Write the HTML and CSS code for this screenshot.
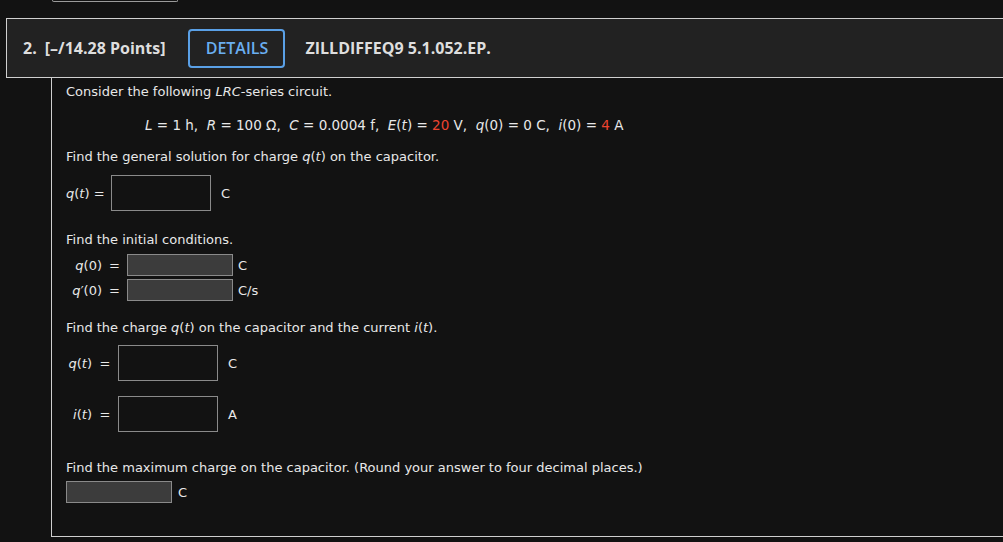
FILE: index.html
```html
<!DOCTYPE html>
<html>
<head>
<meta charset="utf-8">
<link rel="stylesheet" href="styles.css">
</head>
<body>
<div class="prev"></div>
<div class="qhead">
  <span class="num">2.</span>
  <span class="pts">[–/14.28 Points]</span>
  <span class="details">DETAILS</span>
  <span class="code">ZILLDIFFEQ9 5.1.052.EP.</span>
</div>
<div class="qbody">
  <p class="t p1">Consider the following <i>LRC</i>-series circuit.</p>
  <p class="m mline"><i>L</i> = 1 h,&nbsp; <i>R</i> = 100 Ω,&nbsp; <i>C</i> = 0.0004 f,&nbsp; <i>E</i>(<i>t</i>) = <span class="red">20</span> V,&nbsp; <i>q</i>(0) = 0 C,&nbsp; <i>i</i>(0) = <span class="red">4</span> A</p>
  <p class="t p2">Find the general solution for charge <span class="m"><i>q</i>(<i>t</i>)</span> on the capacitor.</p>
  <div class="row r1">
    <span class="m lbl1"><i>q</i>(<i>t</i>) =</span>
    <span class="box big"></span>
    <span class="unit u1">C</span>
  </div>
  <p class="t p3">Find the initial conditions.</p>
  <div class="grid g1">
    <span class="m lbl"><i>q</i>(0)</span><span class="m eq">=</span><span class="box small"></span><span class="unit">C</span>
    <span class="m lbl"><i>q</i>′(0)</span><span class="m eq">=</span><span class="box small"></span><span class="unit">C/s</span>
  </div>
  <p class="t p4">Find the charge <span class="m"><i>q</i>(<i>t</i>)</span> on the capacitor and the current <span class="m"><i>i</i>(<i>t</i>)</span>.</p>
  <div class="grid g2">
    <span class="m lbl"><i>q</i>(<i>t</i>)</span><span class="m eq">=</span><span class="box big"></span><span class="unit">C</span>
    <span class="m lbl"><i>i</i>(<i>t</i>)</span><span class="m eq">=</span><span class="box big"></span><span class="unit">A</span>
  </div>
  <p class="t p5">Find the maximum charge on the capacitor. (Round your answer to four decimal places.)</p>
  <div class="row r5">
    <span class="box small"></span>
    <span class="unit u5">C</span>
  </div>
</div>
</body>
</html>
```
FILE: styles.css
```css
html, body {
  margin: 0;
  padding: 0;
  background: #121212;
  color: #e8e8e8;
  overflow: hidden;
}
body {
  width: 1003px;
  height: 542px;
}
.prev {
  margin-left: 52px;
  width: 124px;
  height: 1px;
  border: 1px solid #9a9a9a;
  border-top: none;
  border-radius: 0 0 3px 3px;
}
.qhead {
  margin-top: 16px;
  margin-left: 6px;
  height: 58px;
  border: 1px solid #d0d0d0;
  border-right: none;
  background: #222222;
  display: flex;
  align-items: center;
  padding-left: 16px;
  font-family: "Open Sans", "Noto Sans", sans-serif;
  font-weight: 700;
  font-size: 16px;
  color: #dedede;
}
.num { margin-right: 8px; }
.pts { margin-right: 23px; }
.details {
  display: flex;
  align-items: center;
  justify-content: center;
  box-sizing: border-box;
  width: 97px;
  height: 39px;
  border: 2px solid #5aa0e6;
  border-radius: 4px;
  color: #6aaef0;
  font-weight: 600;
  margin-right: 20px;
}
.qbody {
  margin-left: 51px;
  height: 452px;
  border-left: 1px solid #cfcfcf;
  border-bottom: 1px solid #cfcfcf;
  padding-left: 14px;
  padding-top: 6px;
  font-family: "DejaVu Sans", sans-serif;
  font-size: 13px;
}
p { margin: 0; line-height: 16px; }
.t { font-family: "DejaVu Sans", sans-serif; font-size: 13px; }
.m { font-family: "DejaVu Sans", sans-serif; }
.m i { font-style: oblique; }
.t .m { font-size: 13px; }
.red { color: #ee4430; }
.mline { margin-top: 17px; margin-left: 79px; font-size: 13.5px; }
.p2 { margin-top: 16px; }
.row { display: flex; align-items: center; }
.r1 { margin-top: 10px; }
.lbl1 { width: 45px; font-size: 13px; }
.box {
  display: block;
  box-sizing: border-box;
  border: 1px solid #8a8a8a;
}
.big { width: 100px; height: 36px; background: #121212; }
.small { width: 106px; height: 22px; background: #3c3c3c; }
.unit { font-family: "DejaVu Sans", sans-serif; font-size: 13px; }
.u1 { margin-left: 10px; }
.p3 { margin-top: 21px; }
.grid {
  display: grid;
  align-items: center;
}
.grid .m { font-size: 13px; }
.g1 {
  margin-top: 6px;
  grid-template-columns: 36px 25px 106px auto;
  row-gap: 3px;
}
.g1 .lbl { text-align: right; }
.g1 .eq { text-align: center; }
.g1 .unit { margin-left: 5px; }
.p4 { margin-top: 19px; }
.g2 {
  margin-top: 9px;
  grid-template-columns: 26px 26px 100px auto;
  row-gap: 15px;
}
.g2 .lbl { text-align: right; }
.g2 .eq { text-align: center; }
.g2 .unit { margin-left: 10px; }
.p5 { margin-top: 28px; }
.r5 { margin-top: 5px; }
.u5 { margin-left: 6px; }
```
